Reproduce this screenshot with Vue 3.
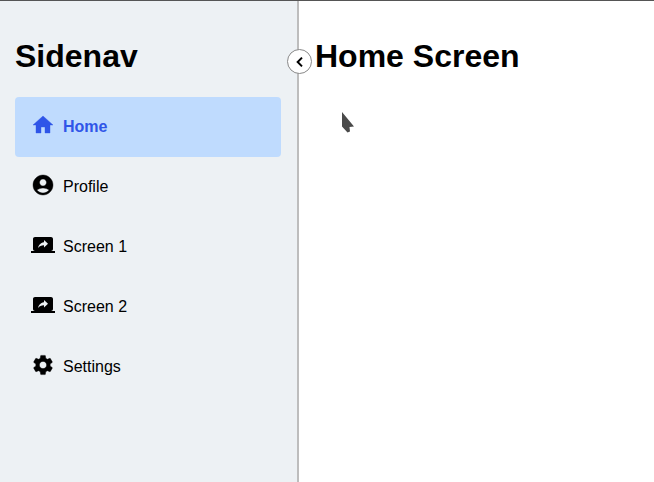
<script setup>
const items = [
  { label: 'Home', icon: 'home', active: true },
  { label: 'Profile', icon: 'profile' },
  { label: 'Screen 1', icon: 'screen' },
  { label: 'Screen 2', icon: 'screen' },
  { label: 'Settings', icon: 'settings' },
]
</script>

<template>
  <div class="page">
    <aside class="sidebar">
      <h1 class="brand">Sidenav</h1>
      <nav class="menu">
        <a v-for="item in items" :key="item.label" class="row" :class="{ active: item.active }">
          <svg class="icon" :class="{ bold: item.icon !== 'screen', raised: item.icon === 'screen' }" viewBox="0 0 24 24" fill="currentColor">
            <path v-if="item.icon === 'home'" d="M10 20v-6h4v6h5v-8h3L12 3 2 12h3v8z" />
            <path v-else-if="item.icon === 'profile'" d="M12 2C6.48 2 2 6.48 2 12s4.48 10 10 10 10-4.48 10-10S17.52 2 12 2zm0 4c1.93 0 3.5 1.57 3.5 3.5S13.93 13 12 13s-3.5-1.57-3.5-3.5S10.07 6 12 6zm0 14c-2.03 0-4.43-.82-6.14-2.88C7.55 15.8 9.68 15 12 15s4.45.8 6.14 2.12C16.43 19.18 14.03 20 12 20z" />
            <path v-else-if="item.icon === 'screen'" d="M20 18c1.1 0 1.99-.9 1.99-2L22 6c0-1.11-.9-2-2-2H4c-1.11 0-2 .89-2 2v10c0 1.1.89 2 2 2H0v2h24v-2h-4zm-7-3.53v-2.19c-2.78 0-4.61.85-6 2.72.56-2.67 2.11-5.33 6-5.87V7l4 3.73-4 3.74z" />
            <path v-else d="M19.14 12.94c.04-.3.06-.61.06-.94 0-.32-.02-.64-.07-.94l2.03-1.58c.18-.14.23-.41.12-.61l-1.92-3.32c-.12-.22-.37-.29-.59-.22l-2.39.96c-.5-.38-1.03-.7-1.62-.94l-.36-2.54c-.04-.24-.24-.41-.48-.41h-3.84c-.24 0-.43.17-.47.41l-.36 2.54c-.59.24-1.13.57-1.62.94l-2.39-.96c-.22-.08-.47 0-.59.22L2.74 8.87c-.12.21-.08.47.12.61l2.03 1.58c-.05.3-.09.63-.09.94s.02.64.07.94l-2.03 1.58c-.18.14-.23.41-.12.61l1.92 3.32c.12.22.37.29.59.22l2.39-.96c.5.38 1.03.7 1.62.94l.36 2.54c.05.24.24.41.48.41h3.84c.24 0 .44-.17.47-.41l.36-2.54c.59-.24 1.13-.56 1.62-.94l2.39.96c.22.08.47 0 .59-.22l1.92-3.32c.12-.22.07-.47-.12-.61l-2.01-1.58zM12 15.6c-1.98 0-3.6-1.62-3.6-3.6s1.62-3.6 3.6-3.6 3.6 1.62 3.6 3.6-1.62 3.6-3.6 3.6z" />
          </svg>
          <span>{{ item.label }}</span>
        </a>
      </nav>
      <button class="toggle" type="button" aria-label="Collapse">
        <svg viewBox="0 0 24 24" width="16" height="16" fill="none" stroke="currentColor" stroke-width="3">
          <path d="M15 5.5L8.5 12l6.5 6.5" />
        </svg>
      </button>
    </aside>
    <main class="content">
      <h1 class="title">Home Screen</h1>
      <svg class="cursor" viewBox="0 0 14 24" width="14" height="24">
        <path d="M1 1L13 15.5L8.5 16L9 20.5L6.5 21.5L1 15.5z" fill="#4a4a4a" stroke="#fff" stroke-opacity=".35" stroke-width="1" paint-order="stroke" />
      </svg>
    </main>
  </div>
</template>

<style scoped>
.page {
  display: flex;
  height: 482px;
  box-sizing: border-box;
  border-top: 1px solid #555;
  font-family: "Liberation Sans", Arial, sans-serif;
  color: #000;
  overflow: hidden;
}
.sidebar {
  position: relative;
  width: 299px;
  box-sizing: border-box;
  flex: none;
  padding: 0 16px 0 15px;
  background: #edf1f4;
  border-right: 2px solid #bdbdbd;
}
.brand {
  margin: 36px 0 22px;
  font-size: 32px;
  line-height: 38px;
  font-weight: 700;
}
.menu {
  display: flex;
  flex-direction: column;
}
.row {
  display: flex;
  align-items: center;
  gap: 8px;
  height: 60px;
  padding-left: 16px;
  border-radius: 4px;
  font-size: 16px;
}
.row.active {
  background: #bfdbfe;
  color: #2f55e8;
  font-weight: 700;
}
.icon {
  width: 24px;
  height: 24px;
  flex: none;
  margin-bottom: 4px;
}
.icon.bold {
  stroke: currentColor;
  stroke-width: .4;
}
.icon.raised {
  margin-bottom: 5px;
}
.toggle {
  position: absolute;
  top: 48px;
  right: -15px;
  width: 25px;
  height: 25px;
  padding: 0;
  display: flex;
  align-items: center;
  justify-content: center;
  border: 1px solid #888;
  border-radius: 50%;
  background: #fff;
  color: #000;
}
.content {
  position: relative;
  flex: 1;
  padding-left: 16px;
}
.title {
  margin: 36px 0 0;
  font-size: 32px;
  line-height: 38px;
  font-weight: 700;
}
.cursor {
  position: absolute;
  left: 42px;
  top: 110px;
}
</style>
